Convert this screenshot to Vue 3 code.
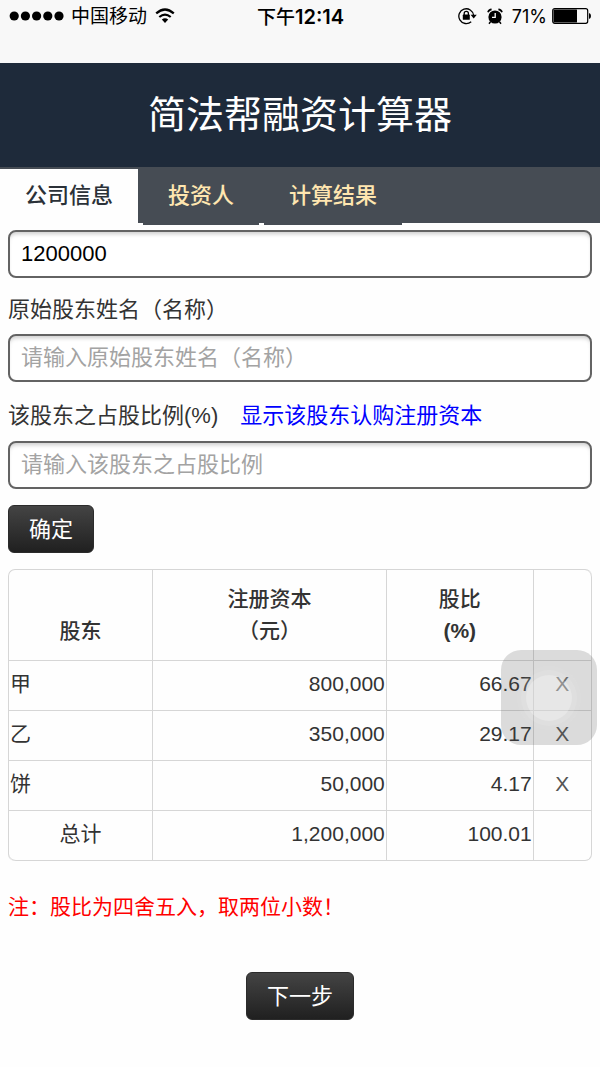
<script setup>
import { ref } from 'vue'

const tabs = ['公司信息', '投资人', '计算结果']
const active = ref(0)
const capital = ref('1200000')
const holderName = ref('')
const holderRatio = ref('')
const rows = ref([
  { name: '甲', amount: '800,000', ratio: '66.67' },
  { name: '乙', amount: '350,000', ratio: '29.17' },
  { name: '饼', amount: '50,000', ratio: '4.17' },
])
</script>

<template>
  <div class="page">
    <div class="status">
      <div class="status-side">
        <svg class="signal" width="55" height="10" viewBox="0 0 55 10" aria-hidden="true">
          <circle v-for="n in 5" :key="n" :cx="n * 11.2 - 6" cy="5" r="4.6" />
        </svg>
        <span class="carrier">中国移动</span>
        <svg class="wifi" width="20" height="16" viewBox="0 0 20 16" aria-hidden="true">
          <path d="M1.2 5.4Q10-2.4 18.8 5.4M4.3 9Q10 4.2 15.7 9" fill="none" stroke="#000" stroke-width="2.2" />
          <path d="M6.8 11.6Q10 9 13.2 11.6L10 15Z" />
        </svg>
      </div>
      <div class="clock">下午<span class="digits">12:14</span></div>
      <div class="status-side end">
        <svg width="19" height="18" viewBox="0 0 19 18" aria-hidden="true">
          <path d="M13.2 14.7A7.4 7.4 0 1 1 15.6 8.4" fill="none" stroke="#000" stroke-width="1.3" />
          <path d="M12.6 7.8h6.2L15.7 11.6Z" />
          <rect x="4.8" y="7.6" width="7" height="5.2" rx="0.6" />
          <path d="M6.2 8V6.5a2.1 2.1 0 0 1 4.2 0V8" fill="none" stroke="#000" stroke-width="1.3" />
        </svg>
        <svg class="alarm" width="16" height="17" viewBox="0 0 16 17" aria-hidden="true">
          <circle cx="8" cy="9" r="6.6" />
          <path d="M8.2 5v4.3H5" fill="none" stroke="#fff" stroke-width="1.3" />
          <path d="M1 4.2Q1.8 1.6 4.6 1.4M15 4.2Q14.2 1.6 11.4 1.4" fill="none" stroke="#000" stroke-width="1.7" />
          <path d="M3.6 13.6L2 15.8M12.4 13.6L14 15.8" stroke="#000" stroke-width="1.5" />
        </svg>
        <span class="percent">71%</span>
        <svg width="40" height="16" viewBox="0 0 40 16" aria-hidden="true">
          <rect x="0.7" y="0.7" width="35" height="14.6" rx="2" fill="none" stroke="#000" stroke-width="1.2" />
          <rect x="1.5" y="1.5" width="23.5" height="13" rx="0.5" />
          <path d="M37 5q2 .6 2 3t-2 3Z" />
        </svg>
      </div>
    </div>

    <header class="banner"><h1>简法帮融资计算器</h1></header>

    <nav class="tabs">
      <button
        v-for="(t, i) in tabs"
        :key="t"
        type="button"
        class="tab"
        :class="{ active: i === active }"
        @click="active = i"
      >{{ t }}</button>
    </nav>

    <main class="content">
      <input v-model="capital" class="field" type="text" aria-label="注册资本" />

      <div class="label-row"><label for="holder-name">原始股东姓名（名称）</label></div>
      <input id="holder-name" v-model="holderName" class="field" type="text" placeholder="请输入原始股东姓名（名称）" />

      <div class="label-row tall">
        <label for="holder-ratio">该股东之占股比例(%)</label>
        <a href="#">显示该股东认购注册资本</a>
      </div>
      <input id="holder-ratio" v-model="holderRatio" class="field" type="text" placeholder="请输入该股东之占股比例" />

      <button type="button" class="btn">确定</button>

      <table class="grid">
        <colgroup>
          <col class="c-name" /><col class="c-amount" /><col class="c-ratio" /><col class="c-remove" />
        </colgroup>
        <thead>
          <tr>
            <th>股东</th>
            <th>注册资本<br />（元）</th>
            <th>股比<br /><b>(%)</b></th>
            <th></th>
          </tr>
        </thead>
        <tbody>
          <tr v-for="(r, i) in rows" :key="r.name">
            <td>{{ r.name }}</td>
            <td class="num">{{ r.amount }}</td>
            <td class="num">{{ r.ratio }}</td>
            <td class="mid"><button type="button" class="remove" @click="rows.splice(i, 1)">X</button></td>
          </tr>
          <tr>
            <td class="mid">总计</td>
            <td class="num">1,200,000</td>
            <td class="num">100.01</td>
            <td></td>
          </tr>
        </tbody>
      </table>

      <p class="note">注：股比为四舍五入，取两位小数！</p>

      <div class="next"><button type="button" class="btn">下一步</button></div>
    </main>

    <div class="touch" aria-hidden="true">
      <svg width="66" height="66" viewBox="0 0 66 66">
        <circle cx="33" cy="33" r="32" fill="#fff" fill-opacity="0.05" />
        <circle cx="33" cy="33" r="28" fill="#fff" fill-opacity="0.1" />
        <circle cx="33" cy="33" r="23" fill="#fff" fill-opacity="0.25" />
      </svg>
    </div>
  </div>
</template>

<style>
body {
  margin: 0;
  background: #fefefe;
}
</style>

<style scoped>
.page {
  position: relative;
  min-height: 100vh;
  font-family: "Liberation Sans", "Noto Sans CJK SC", sans-serif;
  font-size: 22px;
  color: #333;
}

button,
input {
  font: inherit;
  box-sizing: border-box;
  margin: 0;
}

.status {
  display: flex;
  align-items: flex-start;
  height: 63px;
  padding: 0 8px 0 9px;
  background: #f8f8f8;
  color: #000;
  font-size: 19px;
  line-height: 32px;
}

.status-side {
  display: flex;
  flex: 1;
  align-items: center;
  height: 32px;
}

.end {
  justify-content: flex-end;
}

.carrier {
  padding-top: 2px;
  margin: 0 8px 0 7px;
}

.clock {
  padding-top: 1px;
  font-weight: 500;
}

.digits {
  font-family: Inter, sans-serif;
  font-size: 20px;
  font-weight: 600;
}

.alarm {
  margin: 0 9px 0 10px;
}

.percent {
  padding-top: 2px;
  margin-right: 5px;
  font-family: Inter, sans-serif;
  font-size: 18px;
}

.banner {
  display: flex;
  align-items: center;
  justify-content: center;
  height: 104px;
  background: #1e2a3a;
}

h1 {
  margin: 0;
  color: #fff;
  font-size: 38px;
  font-weight: 400;
  line-height: 56px;
}

.tabs {
  display: flex;
  gap: 5px;
  height: 56px;
  background: #464c54;
}

.tab {
  padding: 0 25px 4px;
  border: 0;
  background: #464c54;
  box-shadow: 0 2px 0 #464c54;
  color: #ffe6b0;
  font-weight: 500;
  white-space: nowrap;
}

.tab.active {
  margin-top: 2px;
  padding-bottom: 6px;
  background: #fefefe;
  box-shadow: none;
  color: #2b3138;
}

.content {
  padding: 7px 8px 48px;
}

.field {
  display: block;
  width: 100%;
  height: 48px;
  padding: 0 11px;
  border: 2px solid #636363;
  border-radius: 8px;
  background: #fff;
  box-shadow: inset 0 4px 4px -2px #ccc;
  color: #000;
  outline: 0;
}

.field::placeholder {
  color: #a3a3a3;
  opacity: 1;
}

.label-row {
  display: flex;
  gap: 22px;
  padding: 16px 0 8px;
  line-height: 32px;
}

.label-row.tall {
  line-height: 35px;
}

a {
  color: #00f;
  text-decoration: none;
}

.btn {
  height: 48px;
  padding: 0 20px 4px;
  border: 1px solid #2b2b2b;
  border-radius: 6px;
  background: linear-gradient(#444, #202020);
  color: #fff;
}

.content > .btn {
  display: block;
  margin: 16px 0;
}

.grid {
  width: 100%;
  table-layout: fixed;
  border: 1px solid #d6d6d6;
  border-width: 1px 0 0 1px;
  border-radius: 7px;
  border-spacing: 0;
  font-size: 21px;
}

.c-name {
  width: 24.7%;
}

.c-amount {
  width: 40.1%;
}

.c-ratio {
  width: 25.2%;
}

.c-remove {
  width: 10%;
}

th,
td {
  box-sizing: border-box;
  border: 1px solid #d6d6d6;
  border-width: 0 1px 1px 0;
  line-height: 32px;
}

th {
  padding: 13px 0;
  font-weight: 500;
  vertical-align: bottom;
}

td {
  height: 50px;
  padding: 0 1px 3px;
}

thead th:last-child {
  border-top-right-radius: 7px;
}

tbody tr:last-child td:first-child {
  border-bottom-left-radius: 7px;
}

tbody tr:last-child td:last-child {
  border-bottom-right-radius: 7px;
}

.num {
  text-align: right;
}

.mid {
  text-align: center;
}

.remove {
  padding: 0 8px;
  border: 0;
  background: none;
  color: #555;
}

.note {
  margin: 30px 0 49px;
  color: #f00;
  font-size: 21px;
  line-height: 32px;
}

.next {
  text-align: center;
}

.touch {
  position: absolute;
  top: 650px;
  right: 3px;
  display: flex;
  align-items: center;
  justify-content: center;
  width: 96px;
  height: 95px;
  border-radius: 20px;
  background: rgba(80, 80, 80, 0.2);
  pointer-events: none;
}
</style>
